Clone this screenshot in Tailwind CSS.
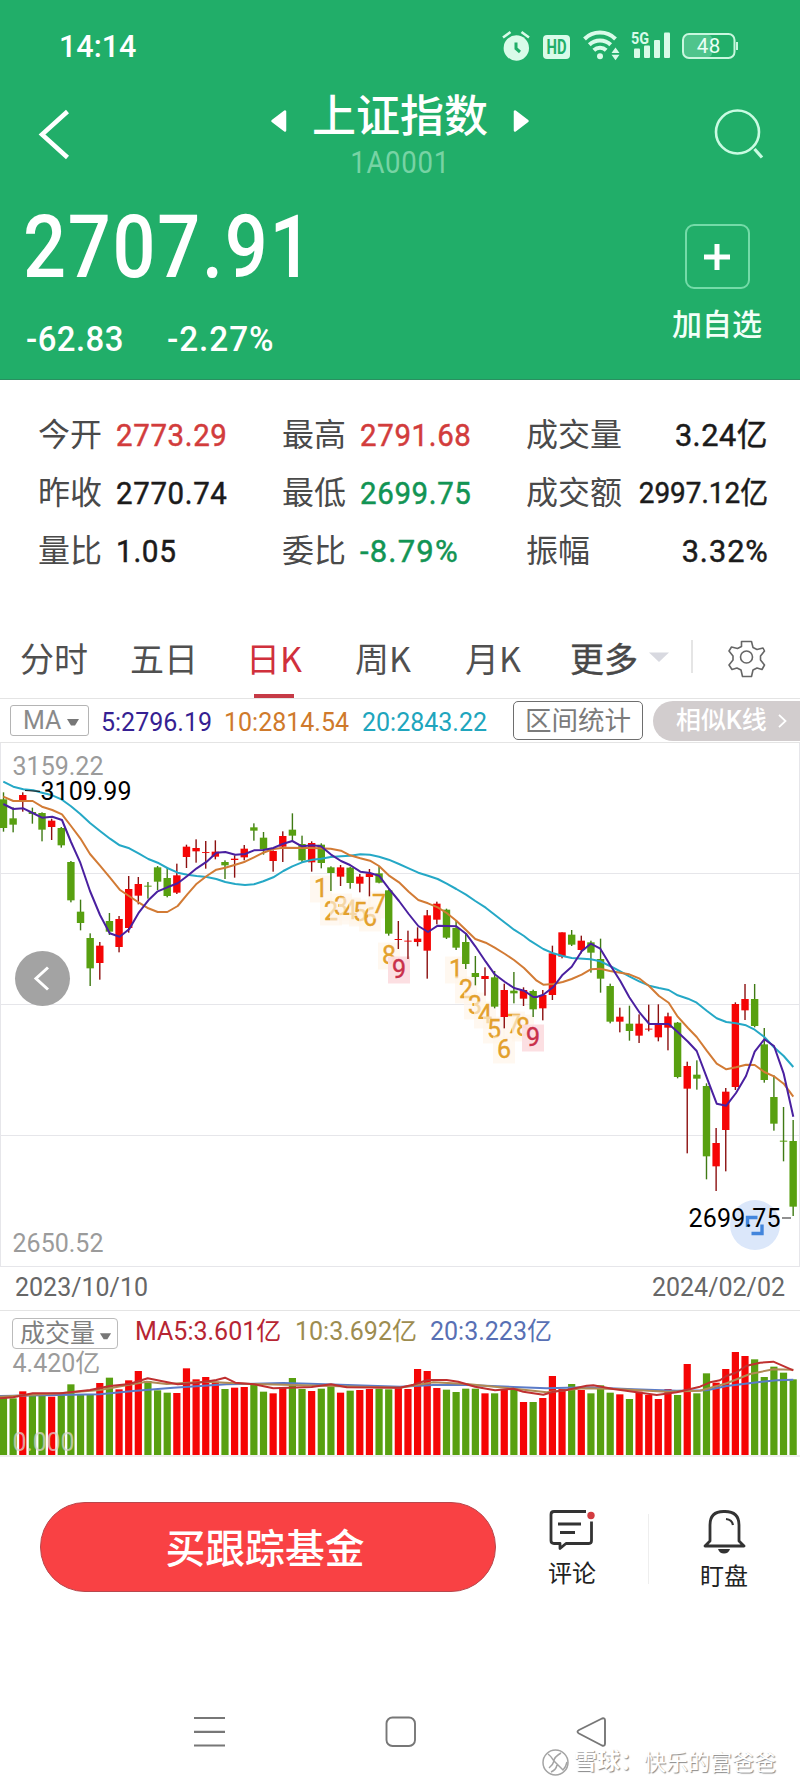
<!DOCTYPE html>
<html lang="zh-CN">
<head>
<meta charset="utf-8">
<title>上证指数 1A0001</title>
<script src="https://cdn.jsdelivr.net/npm/@tailwindcss/browser@4"></script>
</head>
<body class="w-[800px] h-[1787px] bg-white overflow-hidden font-[Roboto,'Noto_Sans_CJK_SC',sans-serif] whitespace-nowrap">

<header class="h-[380px] bg-[#21ae69] text-white flex flex-col border-b border-[#2a8f60]">
  <!-- status bar -->
  <div class="h-[92px] flex items-center justify-between pl-[59px] pr-[61px]">
    <span class="text-[30.500px] font-medium leading-none origin-left pt-[2px]">14:14</span>
    <svg class="w-[240px] h-[36px]" viewBox="499 28 240 36" fill="none">
      <g fill="#d9fbe9">
        <circle cx="516.300" cy="48" r="12.700"/>
        <path d="M503 37.500l7.500-5.500M529 37.500l-7.500-5.500" stroke="#d9fbe9" stroke-width="2.600"/>
        <path d="M516 42.500v6l4 3.500" stroke="#21ae69" stroke-width="3" fill="none"/>
        <rect x="543" y="35" width="27" height="24" rx="4"/>
        <text x="546.500" y="54" font-size="20" font-weight="700" fill="#21ae69" textLength="20" lengthAdjust="spacingAndGlyphs">HD</text>
        <circle cx="600" cy="56.300" r="3"/>
        <path d="M611.500 53l4-5.500 4 5.500zM611.500 54.800l4 5.500 4-5.500z"/>
        <rect x="634" y="48.500" width="6" height="9.500" rx="1"/>
        <rect x="644" y="45.500" width="6" height="12.500" rx="1"/>
        <rect x="654" y="40" width="6" height="18" rx="1"/>
        <rect x="664" y="32.500" width="6" height="25.500" rx="1"/>
        <text x="631" y="43.500" font-size="16.500" font-weight="700" textLength="18" lengthAdjust="spacingAndGlyphs">5G</text>
      </g>
      <g stroke="#d9fbe9" stroke-width="4" fill="none">
        <path d="M584.500 39a22 22 0 0 1 31 0M589.300 44.800a15.500 15.500 0 0 1 21.400 0M593.800 50.300a9 9 0 0 1 12.400 0"/>
      </g>
      <rect x="684" y="35" width="28" height="22" rx="4" fill="#4fc48c"/>
      <rect x="683" y="34" width="51.500" height="24" rx="6" stroke="#c9f7df" stroke-width="2"/>
      <path d="M737 42v8" stroke="#c9f7df" stroke-width="2"/>
      <text x="708.500" y="52.500" font-size="20.500" fill="#e9fff4" text-anchor="middle" textLength="23.500">48</text>
    </svg>
  </div>

  <!-- title row -->
  <div class="h-[92px] grid grid-cols-[1fr_auto_1fr] items-start">
    <svg class="w-[36px] h-[56px] ml-[37px] mt-[14px]" viewBox="37 106 36 56" fill="none" stroke="#fff" stroke-width="4.500"><path d="M67.500 111.500L42 134.500l25.500 23"/></svg>
    <div class="flex flex-col items-center">
      <div class="flex items-center h-[50px] gap-[24px]">
        <svg class="w-[18px] h-[24px] mt-[8px]" viewBox="0 0 18 24"><path d="M15 2.500v19L2.500 12z" fill="#fff" stroke="#fff" stroke-width="2.500" stroke-linejoin="round"/></svg>
        <h1 class="text-[44px] font-medium leading-[50px]">上证指数</h1>
        <svg class="w-[18px] h-[24px] mt-[8px]" viewBox="0 0 18 24"><path d="M3 2.500v19L15.500 12z" fill="#fff" stroke="#fff" stroke-width="2.500" stroke-linejoin="round"/></svg>
      </div>
      <span class="text-[31px] leading-[41px] text-[#77d3a4] scale-x-[.89] tracking-[0.8px] inline-block">1A0001</span>
    </div>
    <svg class="w-[54px] h-[54px] justify-self-end mr-[34px] mt-[14px]" viewBox="712 106 54 54" fill="none" stroke="#c9fbe2" stroke-width="2.600"><circle cx="737.500" cy="132" r="21.500"/><path d="M754.500 149l7.500 8.500" stroke-width="3.200"/></svg>
  </div>

  <!-- price -->
  <div class="flex-1 flex justify-between">
    <div class="pl-[23px]">
      <div class="text-[87px] font-medium leading-[88px] h-[88px] mt-[19px] origin-left scale-x-[.87] tracking-[2px] inline-block">2707.91</div>
      <div class="flex text-[35px] font-medium leading-[40px] mt-[29px]">
        <span class="w-[144px] pl-[3px]"><span class="inline-block origin-left scale-x-[.94] tracking-[0.5px]">-62.83</span></span>
        <span class="inline-block origin-left scale-x-[.95] tracking-[1px]">-2.27%</span>
      </div>
    </div>
    <div class="w-[92px] mr-[37px] flex flex-col items-center mt-[40px]">
      <div class="w-[65px] h-[65px] rounded-[9px] border-2 border-[#74dba8] flex items-center justify-center">
        <svg class="w-[26px] h-[26px]" viewBox="0 0 26 26" stroke="#fff" stroke-width="5"><path d="M0 13h26M13 0v26"/></svg>
      </div>
      <span class="text-[30px] font-medium leading-[40px] mt-[16px] text-[#f2fff8]">加自选</span>
    </div>
  </div>
</header>

<!-- quote figures -->
<section class="h-[228px] pt-[26px] text-[32px] text-[#1b1b1b]">
  <div class="grid grid-cols-[244px_244px_242px] ml-[38px] auto-rows-[58px] leading-[58px] [&_b]:font-normal [&_b]:[-webkit-text-stroke:0.5px]">
    <div class="flex"><span class="w-[78px] text-[#4a4a4a]">今开</span><b class="text-[#d23c3c] origin-left scale-x-[.92] tracking-[0.7px]">2773.29</b></div>
    <div class="flex"><span class="w-[78px] text-[#4a4a4a]">最高</span><b class="text-[#d23c3c] origin-left scale-x-[.92] tracking-[0.7px]">2791.68</b></div>
    <div class="flex justify-between"><span class="text-[#4a4a4a]">成交量</span><b class="origin-right scale-x-[.96] tracking-[0.5px]">3.24亿</b></div>
    <div class="flex"><span class="w-[78px] text-[#4a4a4a]">昨收</span><b class="origin-left scale-x-[.92] tracking-[0.7px]">2770.74</b></div>
    <div class="flex"><span class="w-[78px] text-[#4a4a4a]">最低</span><b class="text-[#129454] origin-left scale-x-[.92] tracking-[0.7px]">2699.75</b></div>
    <div class="flex justify-between"><span class="text-[#4a4a4a]">成交额</span><b class="text-[30px] origin-right scale-x-[.93]">2997.12亿</b></div>
    <div class="flex"><span class="w-[78px] text-[#4a4a4a]">量比</span><b class="origin-left scale-x-[.93] tracking-[0.7px]">1.05</b></div>
    <div class="flex"><span class="w-[78px] text-[#4a4a4a]">委比</span><b class="text-[#129454] origin-left scale-x-[.97] tracking-[1.200px]">-8.79%</b></div>
    <div class="flex justify-between"><span class="text-[#4a4a4a]">振幅</span><b class="origin-right scale-x-[.96] tracking-[1px] -mr-px">3.32%</b></div>
  </div>
</section>

<!-- period tabs -->
<nav class="h-[90px] flex *:shrink-0 text-[34px] leading-[86px] text-[#505050] pl-[20px] pt-[7px] font-['Noto_Sans_CJK_SC',sans-serif]">
  <span class="w-[110px]">分时</span>
  <span class="w-[116px]">五日</span>
  <span class="w-[109px] text-[#d0303c] flex flex-col">
    <span class="h-[79px]">日K</span>
    <i class="block w-[40px] h-[4px] bg-[#c63a46] ml-[8px]"></i>
  </span>
  <span class="w-[110px]">周K</span>
  <span class="w-[105px]">月K</span>
  <span class="w-[78px] text-[#484848] [-webkit-text-stroke:0.4px]">更多</span>
  <svg class="w-[152px] h-[76px]" viewBox="648 615 152 76" fill="none">
    <path d="M649 652.500h20l-10 9.500z" fill="#d8d9e0"/>
    <path d="M692 640v33" stroke="#dcdcdc" stroke-width="1.500"/>
    <path d="M741.500 641.500h10l1.500 6 4 2 6-1.500 1.500 3-4 5v4l4 5-2.500 4.500-5-1.500-4 2-1.500 6.500h-9l-1.500-6.500-4-2-5 1.500-3-4.500 4-5v-4l-4-5 2.500-4 6 1.500 4-2z" stroke="#666" stroke-width="1.600" stroke-linejoin="round"/>
    <circle cx="746.500" cy="657" r="6" stroke="#666" stroke-width="1.600"/>
  </svg>
</nav>

<!-- moving-average legend -->
<div class="h-[45px] border-y border-[#e4e4e4] flex items-center *:shrink-0 text-[25px] overflow-hidden">
  <div class="ml-[10px] w-[79px] h-[31px] border border-[#b4b4b4] rounded-[3px] flex items-center pl-[12px] text-[#8a8a8a] leading-none">MA<svg class="w-[14px] h-[8px] ml-[5px] mt-[5px]" viewBox="0 0 14 8"><path d="M1 0h12l-4 6.500h-4z" fill="#777"/></svg></div>
  <span class="w-[123px] ml-[12px] pt-[5px] text-[#361f92]">5:2796.19</span>
  <span class="w-[138px] pt-[5px] text-[#cf7a2b]">10:2814.54</span>
  <span class="w-[151px] pt-[5px] text-[#20a5bd]">20:2843.22</span>
  <div class="w-[130px] h-[39px] border-[1.5px] border-[#6e6e6e] rounded-[5px] text-[26.500px] leading-[37px] text-center text-[#7b7b7b]">区间统计</div>
  <div class="ml-[10px] w-[150px] h-[40px] rounded-l-full bg-[#d2cdce] text-white text-[25px] font-medium leading-[39px] pl-[23px] flex items-center">相似K线<svg class="w-[9px] h-[14px] ml-[11px]" viewBox="0 0 9 14" fill="none" stroke="#fff" stroke-width="1.800"><path d="M1 0.800L7.500 7L1 13.200"/></svg></div>
</div>

<!-- candlestick chart -->
<svg id="k" class="block w-[800px] h-[524px]" viewBox="0 743 800 524" fill="none">
  <path d="M0 873.500h800M0 1004.500h800M0 1135.500h800M0 1266.500h800M.5 743v524M799.500 743v524" stroke="#e6e6ea"/>
  <circle cx="755" cy="1225" r="25" fill="#dbe7fa"/>
  <path d="M747.500 1227v-9.500h10M762 1224.500v9h-10.500" stroke="#4285dc" stroke-width="3.400"/>
  <g id="count"></g><g id="candles"></g><g id="ma" stroke-width="2" stroke-linejoin="round"></g>
  <path d="M25 790.500l15 .8M782 1218h9" stroke="#222" stroke-width="1.200"/>
  <g font-size="25">
    <text x="12.500" y="775" fill="#9b9b9b" textLength="91">3159.22</text>
    <text x="40.500" y="799.500" fill="#000" textLength="91">3109.99</text>
    <text x="12.500" y="1251.500" fill="#9b9b9b" textLength="91">2650.52</text>
    <text x="688.500" y="1226.500" fill="#000" textLength="92">2699.75</text>
  </g>
  <circle cx="42.500" cy="978.500" r="27.500" fill="#a3a3a3"/>
  <path d="M48 967.500l-12 11 12 11" stroke="#fff" stroke-width="3"/>
</svg>

<div class="h-[44px] border-b border-[#e4e4e4] flex justify-between items-center pl-[15px] pr-[15px] pb-[2px] text-[25px] text-[#676767]">
  <span>2023/10/10</span><span>2024/02/02</span>
</div>

<!-- volume chart -->
<section class="h-[146px] grid">
  <svg class="w-[800px] h-[146px] col-start-1 row-start-1" viewBox="0 1311 800 146" fill="none">
    <g id="vol"></g><g id="vma" stroke-width="2" stroke-linejoin="round"></g>
    <path d="M0 1456h800" stroke="#ddd"/>
    <g font-size="25" fill="#9b9b9b">
      <text x="12.500" y="1371.500">4.420亿</text>
      <text x="12.500" y="1450.500" fill="#d8d4d0" fill-opacity=".75" textLength="62">0.000</text>
    </g>
  </svg>
  <div class="col-start-1 row-start-1 h-[42px] flex items-center text-[25px]">
    <div class="ml-[12px] mt-[3px] w-[106px] h-[31px] border-[1.5px] border-[#bbb] rounded-[4px] flex items-center pl-[7px] text-[#808080] leading-none">成交量<svg class="w-[13px] h-[8px] ml-[4px] mt-[7px]" viewBox="0 0 14 8"><path d="M1 0h12l-4 6.500h-4z" fill="#777"/></svg></div>
    <span class="w-[160px] ml-[17px] text-[#b62533]">MA5:3.601亿</span>
    <span class="w-[135px] text-[#9d8c50]">10:3.692亿</span>
    <span class="text-[#5870b4]">20:3.223亿</span>
  </div>
</section>

<!-- actions -->
<div class="h-[214px] flex pt-[45px] pl-[40px] items-start">
  <button class="w-[456px] h-[90px] rounded-full bg-[#f94144] border border-[#b8474c] text-white text-[39.800px] font-medium leading-[86px] pt-[4px] pr-[6px]">买跟踪基金</button>
  <div class="w-[152px] flex flex-col items-center text-[#222] text-[24px] pt-[6px]">
    <svg class="w-[50px] h-[44px]" viewBox="547 1508 50 44" fill="none" stroke="#333" stroke-width="2.800" stroke-linejoin="round">
      <path d="M586 1511.500h-32q-3 0-3 3v26q0 3 3 3h6v5l6-5h23q2.500 0 2.500-3v-19"/>
      <path d="M558 1524h23M560 1532.500h15"/><circle cx="591" cy="1515.500" r="3.700" fill="#d33c40" stroke="none"/>
    </svg>
    <span class="leading-[34px] mt-[5px]">评论</span>
  </div>
  <i class="w-px h-[70px] bg-[#eee] mt-[12px]"></i>
  <div class="w-[150px] flex flex-col items-center text-[#222] text-[24px] pt-[6px]">
    <svg class="w-[48px] h-[48px]" viewBox="700 1508 48 48" fill="none" stroke="#333" stroke-width="2.800" stroke-linejoin="round">
      <path d="M710 1541v-16q0-13.500 13.500-13.500h1.500q14 0 14 13.500v16l5 5h-39z"/>
      <path d="M726 1519q6 .5 7 6" stroke-width="2.200"/><path d="M718 1549h12q-1.500 4.500-6 4.500t-6-4.500z" fill="#333" stroke="none"/>
    </svg>
    <span class="leading-[34px] mt-[4px]">盯盘</span>
  </div>
</div>

<!-- system navigation -->
<footer class="h-[116px] grid">
  <svg class="w-[800px] h-[116px] col-start-1 row-start-1" viewBox="0 1671 800 116" fill="none" stroke="#777" stroke-width="1.900">
    <path d="M194 1718h31M194 1731.800h31M194 1745.500h31" stroke-width="2.200"/>
    <rect x="386.500" y="1717.500" width="28.500" height="28.500" rx="6"/>
    <path d="M602 1718.500l-23 11.500q-3 1.700 0 3.500l23 12q3 1 3-2v-23q0-3-3-2z" stroke-linejoin="round"/>
  </svg>
  <div class="col-start-1 row-start-1 self-end flex items-center h-[49px] pl-[541px] text-white [text-shadow:1px_1px_1px_#888]">
    <svg class="w-[29px] h-[29px]" viewBox="0 0 29 29" fill="none" stroke="#a4a4a4" stroke-width="1.500"><circle cx="14.500" cy="14.500" r="12.500"/><path d="M7 6q3 2 6 7-1 4-5 7M20 5q-7 4-7 8l9 9q3-3 4-8M10 24q5-2 6-7"/></svg>
    <span class="text-[23px] font-bold ml-[4px] w-[66px]">雪球：</span>
    <span class="text-[22px] ml-[4px]">快乐的富爸爸</span>
  </div>
</footer>

<script>
const NS = 'http://www.w3.org/2000/svg', GREEN = '#58a010', RED = '#f50505';
const STEP = 9.63, X0 = 3.5;
function add(parent, tag, attrs, text) {
  const e = document.createElementNS(NS, tag);
  for (const k in attrs) e.setAttribute(k, attrs[k]);
  if (text) e.textContent = text;
  document.getElementById(parent).appendChild(e);
}
// Candles: colour, high, body top, body bottom, low; in thirds of a pixel from each block's base.
const blocks = [
 [730, 'G187,208,294,305 G232,265,284,307 R187,195,213,245 G233,246,252,281 G247,249,299,334 R266,272,291,330 G291,294,346,353 G393,396,511,517 G509,545,579,601 G610,624,715,768 R636,647,699,749 G549,573,605,615 R558,567,651,667 R438,477,594,608 R441,462,497,523 G456,467,470,506 G408,412,455,480 G412,444,498,502 R401,436,488,492 R344,350,381,414 R328,354,364,398 R333,366,368,416 R331,365,380,388 G391,396,406,447 R376,386,390,443 R345,356,382,391 G280,292,302,332 G306,323,358,374'],
 [780, 'R211,213,243,275 R154,168,200,246 G100,149,167,182 G167,192,241,246 R184,189,247,275 G190,194,249,265 G259,262,279,333 R255,262,290,318 G260,263,309,326 R282,290,311,337 R267,280,291,349 G258,280,308,310 G328,331,461,467 R423,477,480,507 R452,482,484,537 R442,476,486,499 R390,406,512,596 R365,371,419,433 G386,389,473,477 G420,444,503,510 G462,486,552,567 G528,579,591,616 R562,588,597,647 G573,592,680,685 R611,630,711,745 G576,632,640,670 R622,630,656,678 G629,633,688,711'],
 [900, 'R270,285,325,361 R137,160,285,300 R97,97,170,175 G90,104,134,138 R107,122,150,160 G122,127,158,218 G116,177,236,278 G251,258,365,370 R323,350,365,397 G317,371,393,422 R343,371,407,429 R314,386,388,394 R313,371,412,424 R338,349,383,451 G366,368,531,535 R485,498,566,760 G481,524,536,569 G550,558,769,838 R684,729,799,873 R564,575,690,814 R307,312,561,570 R252,297,331,360 G252,297,378,382 G384,433,540,548 G526,591,671,692 G621,722,725,784 G660,723,920,948']
];
let i = 0;
for (const [base, s] of blocks) for (const c of s.split(' ')) {
  const [h, t, b, l] = c.slice(1).split(',').map(v => base + v / 3), x = X0 + STEP * i++, g = c[0] === 'G';
  add('candles', 'rect', {x: x - .7, y: h, width: 1.4, height: l - h, fill: g ? '#3f7a14' : '#8c1010'});
  add('candles', 'rect', {x: x - 3.7, y: t, width: 7.4, height: Math.max(b - t, .9), fill: g ? GREEN : RED});
}
function line(parent, color, parts) {
  const pts = parts.flatMap(([ox, oy, s]) => s.split(' ').map(p => { const [x, y] = p.split(',').map(Number); return (ox + x / 3).toFixed(1) + ',' + (oy + y / 3).toFixed(1); }));
  add(parent, 'polyline', {points: pts.join(' '), stroke: color});
}
line('ma', '#25a8c6', [
 [0,730,'10,155 40,170 70,178 100,181 126,188 157,196 186,209 213,229 241,252 270,279 300,303 330,326 359,346 388,355 417,371 445,387 473,398 502,414 533,428 562,434 590,438 620,441 649,447 676,456 706,462 735,465 762,463'],
 [260,780,'10,304 40,292 70,273 97,259 126,247 157,239 183,236 212,231 243,229 270,227 301,223 330,224 357,230 386,239 417,252 446,265 475,278 504,287 533,297 560,311 589,327 618,344 646,363 677,383 704,404 735,428 762,449 792,468'],
 [530,900,'0,122 40,147 70,160 98,168 125,174 182,178 211,184 240,198 271,214 298,229 329,245 358,257 387,264 416,270 443,286 474,296 500,308 530,332 560,355 589,366 618,370 648,376 674,389 703,411 732,442 761,468 790,501']]);
line('ma', '#d27b35', [
 [0,730,'10,200 40,213 98,213 126,230 157,240 186,253 213,288 241,325 270,372 300,407 330,443 359,479 388,499 417,518 445,535 473,546 502,546 533,528 562,493 590,461 620,438 649,419 676,413 706,404 735,395 762,382'],
 [260,780,'10,218 40,207 70,203 157,204 212,206 243,212 270,226 301,235 330,242 357,258 386,286 417,307 446,335 475,360 504,370 533,382 560,399 589,422 618,450 646,477 677,488 704,503 735,522 762,540 792,564'],
 [530,900,'0,222 20,242 40,254 70,252 98,246 125,237 155,224 182,208 211,206 240,213 271,218 298,223 329,236 358,259 387,288 416,308 443,350 474,384 500,411 530,452 560,491 589,508 618,502 648,494 674,495 703,516 732,529 761,551 790,590']]);
line('ma', '#4a20a0', [
 [0,730,'10,222 40,237 70,235 98,249 126,263 157,260 186,270 213,336 241,398 270,483 300,555 329,610 359,620 388,597 417,547 445,511 473,484 502,472 533,460 562,438 590,415 620,395 649,368 676,366 706,374 735,372 762,361'],
 [260,780,'10,210 40,204 70,191 97,183 126,199 157,196 183,199 212,223 243,243 270,255 301,275 330,279 357,287 386,325 417,363 446,402 475,438 504,456 533,437 589,439 618,461 646,499 677,545 704,583 735,606 762,624 792,632'],
 [530,900,'10,291 20,291 40,284 70,261 98,224 125,200 155,154 182,131 211,146 240,194 271,243 298,292 329,338 358,372 416,372 443,396 474,425 500,453 530,532 560,611 589,617 618,579 648,528 674,455 703,418 732,438 761,521 790,650']]);
// Sequential count marks 1 to 9, each on its own tinted tile.
const marks = [[321,888],[331,911],[341,906],[350,910],[360,912],[370,917],[379,904],[389,955],[399,969],[456,969],[466,989],[475,1005],[485,1014],[494,1029],[504,1049],[514,1024],[523,1027],[533,1037]];
marks.forEach(([x, y], n) => {
  const d = n % 9 + 1, last = d === 9;
  add('count', 'rect', {x: x - 11, y: y - 12.5, width: 22, height: 27, fill: last ? '#fcdde0' : '#fff5e8', 'fill-opacity': last ? .95 : .65});
  add('count', 'text', {x, y: y + 9, 'font-size': 25, 'text-anchor': 'middle', fill: last ? '#c9304a' : '#e3a02c', stroke: last ? '#c9304a' : '#e3a02c', 'stroke-width': .4}, String(d));
});
'G590 G595 R574 G588 G588 R590 G585 G553 G585 G585 R549 G533 R568 R541 R513 G543 G571 G578 R579 R505 R538 R531 R545 G567 R563 R561 G550 G575 R580 R562 G534 G567 R573 G566 G556 R578 G572 R570 R567 G566 G568 R564 R567 R507 R513 R564 G569 G576 G566 G566 R580 G580 R570 G565 R606 G606 R594 R528 R567 G552 R570 G580 G556 G578 R583 G597 R575 R585 R597 R567 G585 R492 G580 G520 R548 R507 R456 R468 G478 G531 G500 G518 G538'.split(' ').forEach((s, n) => {
  const y = 1200 + s.slice(1) / 3;
  add('vol', 'rect', {x: X0 + STEP * n - 3.6, y, width: 7.2, height: 1455 - y, fill: s[0] === 'G' ? GREEN : RED});
});
line('vma', '#5a7bc8', [[0,1200,'0,588 300,583 400,573 520,563 680,553 850,549 930,551 1200,560'],[400,1200,'100,555 200,555 340,561 440,565 560,562 700,568 830,572 920,571 980,558 1060,548 1130,541 1180,539']]);
line('vma', '#b08a55', [[0,1200,'0,590 180,580 300,570 400,552 440,545 500,552 620,545 750,552 880,555 990,558 1200,563'],[400,1200,'100,547 200,552 350,567 440,577 550,565 650,567 800,575 900,572 980,550 1050,522 1120,508 1180,509']]);
line('vma', '#bf3030', [[0,1200,'0,595 40,592 98,580 183,580 270,570 330,558 388,552 443,535 480,542 533,553 590,549 649,540 675,533 706,548 762,553 820,565 935,561 993,553 1040,562 1200,563'],[400,1200,'40,554 83,540 140,540 175,545 225,560 285,571 340,566 370,575 430,584 460,575 500,570 560,557 580,556 640,567 700,575 770,585 830,577 900,560 930,547 960,541 980,527 1006,519 1040,497 1080,488 1120,485 1180,511']]);
</script>
</body>
</html>
